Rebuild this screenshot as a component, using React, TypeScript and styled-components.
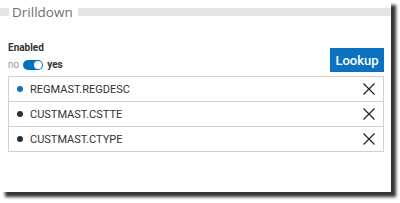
import React, { useState } from 'react';
import styled, { createGlobalStyle } from 'styled-components';

const GlobalStyle = createGlobalStyle`
  html, body {
    margin: 0;
    padding: 0;
    background: #fff;
  }
  body {
    font-family: Roboto, "Liberation Sans", sans-serif;
  }
`;

const Page = styled.div`
  padding-bottom: 11px;
`;

const Panel = styled.div`
  width: 391px;
  height: 192px;
  background: #fff;
  box-shadow: 5px 5px 3px rgba(0, 0, 0, 0.8);
  box-sizing: border-box;
  padding-top: 3px;
`;

const TitleBar = styled.div`
  display: flex;
  align-items: center;
  height: 18px;
  margin-bottom: 21px;
`;

const TitleLine = styled.div<{ $grow?: boolean }>`
  height: 8px;
  background: #e5e5e5;
  width: ${(p) => (p.$grow ? 'auto' : '9px')};
  flex: ${(p) => (p.$grow ? '1' : 'none')};
`;

const Title = styled.span`
  font-family: "Open Sans", "Noto Sans", sans-serif;
  font-size: 13.5px;
  color: #6f6f6f;
  padding: 0 5px 0 3px;
  line-height: 18px;
`;

const Body = styled.div`
  padding: 0 7px 0 8px;
`;

const TopRow = styled.div`
  display: flex;
  justify-content: space-between;
  align-items: flex-end;
  margin-bottom: 4px;
`;

const Label = styled.div`
  font-size: 10px;
  font-weight: 700;
  color: #333;
  margin-bottom: 6px;
`;

const ToggleRow = styled.div`
  display: flex;
  align-items: center;
  gap: 4px;
  font-size: 10px;
  margin-bottom: 2px;
`;

const Off = styled.span`
  color: #999;
`;

const On = styled.span`
  color: #333;
  font-weight: 700;
`;

const Track = styled.button<{ $on: boolean }>`
  width: 20px;
  height: 10px;
  border-radius: 5px;
  border: none;
  padding: 0;
  background: ${(p) => (p.$on ? '#0070c0' : '#bbb')};
  position: relative;
  cursor: pointer;

  &::after {
    content: '';
    position: absolute;
    top: 1px;
    left: ${(p) => (p.$on ? '11px' : '1px')};
    width: 8px;
    height: 8px;
    border-radius: 50%;
    background: #fff;
  }
`;

const LookupButton = styled.button`
  width: 54px;
  height: 24px;
  background: #0a72c0;
  color: #fff;
  border: none;
  font-family: Roboto, "Liberation Sans", sans-serif;
  font-size: 13px;
  font-weight: 500;
  padding: 0;
  cursor: pointer;
`;

const List = styled.div`
  border: 1px solid #cfcfcf;
  display: flex;
  flex-direction: column;
`;

const Row = styled.div`
  display: flex;
  align-items: center;
  height: 24px;
  padding: 0 7px 0 8px;
  & + & {
    border-top: 1px solid #cfcfcf;
  }
`;

const Dot = styled.span<{ $active?: boolean }>`
  width: 6px;
  height: 6px;
  border-radius: 50%;
  background: ${(p) => (p.$active ? '#0a72c0' : '#2b2f33')};
  margin-right: 7px;
`;

const RowText = styled.span`
  flex: 1;
  font-size: 11px;
  color: #333;
`;

const RemoveButton = styled.button`
  border: none;
  background: none;
  padding: 0;
  width: 14px;
  height: 14px;
  display: flex;
  cursor: pointer;
`;

const items = [
  { name: 'REGMAST.REGDESC', active: true },
  { name: 'CUSTMAST.CSTTE', active: false },
  { name: 'CUSTMAST.CTYPE', active: false },
];

const App: React.FC = () => {
  const [enabled, setEnabled] = useState(true);

  return (
    <Page>
      <GlobalStyle />
      <Panel>
        <TitleBar>
          <TitleLine />
          <Title>Drilldown</Title>
          <TitleLine $grow />
        </TitleBar>
        <Body>
          <TopRow>
            <div>
              <Label>Enabled</Label>
              <ToggleRow>
                <Off>no</Off>
                <Track $on={enabled} onClick={() => setEnabled(!enabled)} />
                <On>yes</On>
              </ToggleRow>
            </div>
            <LookupButton>Lookup</LookupButton>
          </TopRow>
          <List>
            {items.map((item) => (
              <Row key={item.name}>
                <Dot $active={item.active} />
                <RowText>{item.name}</RowText>
                <RemoveButton>
                  <svg width="14" height="14" viewBox="0 0 14 14">
                    <path d="M1.5 1.5 L12.5 12.5 M12.5 1.5 L1.5 12.5" stroke="#222" strokeWidth="1.2" fill="none" />
                  </svg>
                </RemoveButton>
              </Row>
            ))}
          </List>
        </Body>
      </Panel>
    </Page>
  );
};

export default App;
